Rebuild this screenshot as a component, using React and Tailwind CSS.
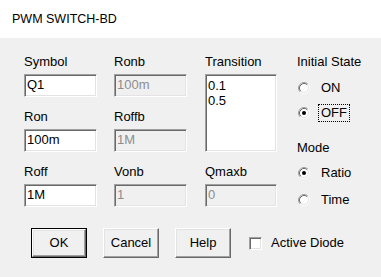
import React from 'react'

const FONT = { fontFamily: '"Liberation Sans", Arial, sans-serif' }

function Field({ value, disabled }) {
  return (
    <div className={`h-[23px] border border-t-[#a0a0a0] border-l-[#a0a0a0] border-b-white border-r-white shadow-[inset_1px_1px_0_#696969,inset_-1px_-1px_0_#e3e3e3] pl-[2px] pt-[2px] text-[13px] leading-[15px] ${disabled ? 'bg-[#f0f0f0] text-[#8d8d8d]' : 'bg-white text-black'}`}>
      {value}
    </div>
  )
}

function Group({ label, value, disabled }) {
  return (
    <div className="flex flex-col">
      <div className="h-[15px] text-[13px] leading-[15px] text-black">{label}</div>
      <div className="mt-[5px]">
        <Field value={value} disabled={disabled} />
      </div>
    </div>
  )
}

function Radio({ label, checked, focused }) {
  return (
    <div className="flex items-center h-[18px] gap-[8px]">
      <svg width="12" height="12" viewBox="0 0 12 12" className="shrink-0">
        <circle cx="6" cy="6" r="4.2" fill="#fff" />
        <path d="M2.11 9.89 A5.5 5.5 0 0 1 9.89 2.11" fill="none" stroke="#a0a0a0" strokeWidth="1" />
        <path d="M9.89 2.11 A5.5 5.5 0 0 1 2.11 9.89" fill="none" stroke="#ffffff" strokeWidth="1" />
        <path d="M2.82 9.18 A4.5 4.5 0 0 1 9.18 2.82" fill="none" stroke="#696969" strokeWidth="1" />
        <path d="M9.18 2.82 A4.5 4.5 0 0 1 2.82 9.18" fill="none" stroke="#e3e3e3" strokeWidth="1" />
        {checked && <circle cx="6" cy="6" r="2" fill="#000" />}
      </svg>
      <span className={`px-[2px] h-[18px] leading-[16px] text-[13px] text-black border border-dotted ${focused ? 'border-black' : 'border-transparent'}`}>
        {label}
      </span>
    </div>
  )
}

function Button({ children, isDefault }) {
  return (
    <div className={`w-[56px] h-[30px] ${isDefault ? 'border border-black' : ''}`}>
      <div className="w-full h-full bg-[#f0f0f0] border border-t-white border-l-white border-b-[#696969] border-r-[#696969] shadow-[inset_-1px_-1px_0_#a0a0a0,inset_1px_1px_0_#e3e3e3] flex items-center justify-center text-[13px] text-black">
        {children}
      </div>
    </div>
  )
}

export default function App() {
  return (
    <div className="w-[381px] h-[277px] bg-[#f0f0f0] flex flex-col overflow-hidden" style={FONT}>
      {/* Title */}
      <div className="h-[38px] bg-white pl-[12px] pt-[1px] flex items-center text-[12.5px] text-black">PWM SWITCH-BD</div>

      {/* Body */}
      <div className="pt-[16px] pl-[24px] flex flex-col">
        <div className="flex h-[153px]">
          <div className="w-[73px] flex flex-col gap-[12px]">
            <Group label="Symbol" value="Q1" />
            <Group label="Ron" value="100m" />
            <Group label="Roff" value="1M" />
          </div>
          <div className="w-[73px] ml-[17px] flex flex-col gap-[12px]">
            <Group label="Ronb" value="100m" disabled />
            <Group label="Roffb" value="1M" disabled />
            <Group label="Vonb" value="1" disabled />
          </div>
          <div className="w-[72px] ml-[18px] flex flex-col">
            <div className="h-[15px] text-[13px] leading-[15px] text-black">Transition</div>
            <div className="mt-[5px] h-[78px] bg-white border border-t-[#a0a0a0] border-l-[#a0a0a0] border-b-white border-r-white shadow-[inset_1px_1px_0_#696969,inset_-1px_-1px_0_#e3e3e3] pl-[2px] pt-[3px] text-[13px] leading-[15px] text-black">
              <div>0.1</div>
              <div>0.5</div>
            </div>
            <div className="mt-[12px]">
              <Group label="Qmaxb" value="0" disabled />
            </div>
          </div>
          <div className="ml-[20px] flex flex-col">
            <div className="h-[15px] text-[13px] leading-[15px] text-black">Initial State</div>
            <div className="mt-[10px] pl-[1px]"><Radio label="ON" /></div>
            <div className="mt-[7px] pl-[1px]"><Radio label="OFF" checked focused /></div>
            <div className="mt-[18px] h-[15px] text-[13px] leading-[15px] text-black">Mode</div>
            <div className="mt-[9px] pl-[1px]"><Radio label="Ratio" checked /></div>
            <div className="mt-[9px] pl-[1px]"><Radio label="Time" /></div>
          </div>
        </div>

        {/* Buttons */}
        <div className="mt-[21px] ml-[7px] flex items-center gap-[16px]">
          <Button isDefault>OK</Button>
          <Button>Cancel</Button>
          <Button>Help</Button>
          <div className="flex items-center ml-[2px] gap-[9px]">
            <div className="w-[13px] h-[13px] bg-white border border-t-[#a0a0a0] border-l-[#a0a0a0] border-b-white border-r-white shadow-[inset_1px_1px_0_#696969,inset_-1px_-1px_0_#e3e3e3]" />
            <span className="text-[13px] text-black">Active Diode</span>
          </div>
        </div>
      </div>
    </div>
  )
}
